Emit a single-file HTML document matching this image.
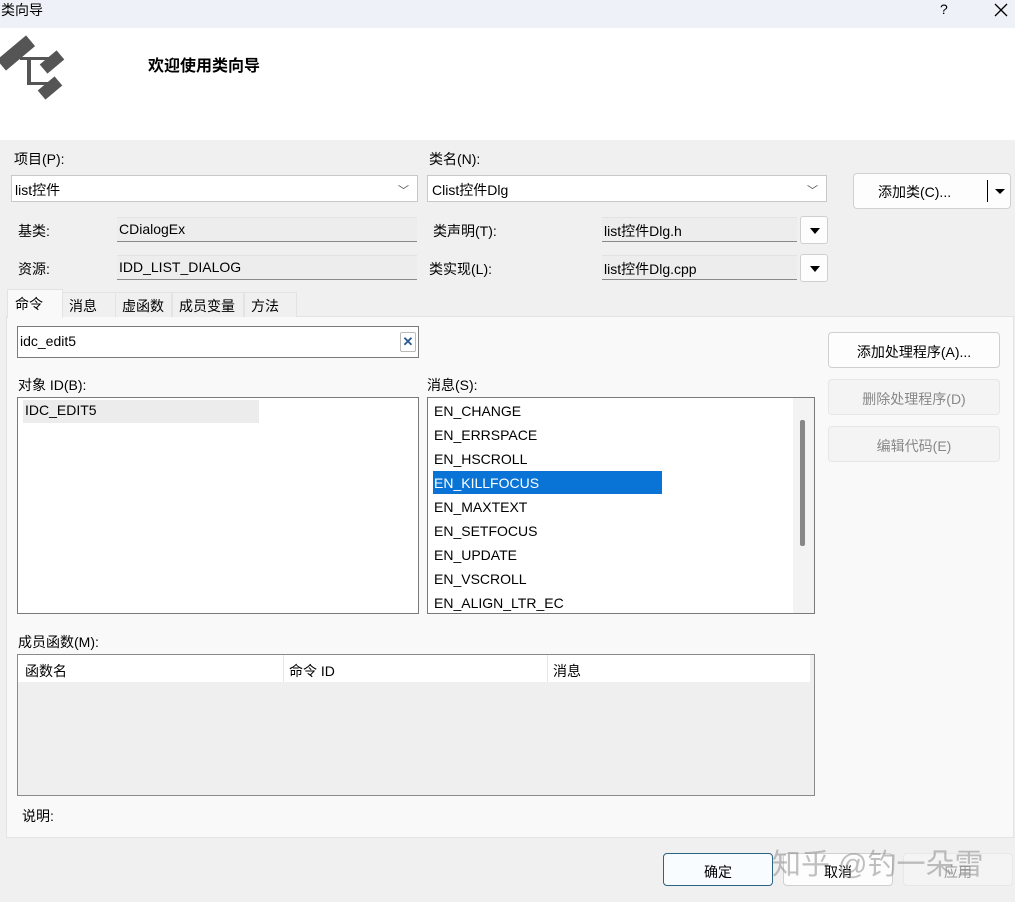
<!DOCTYPE html>
<html><head><meta charset="utf-8"><style>
*{box-sizing:border-box;margin:0;padding:0}
body{width:1015px;height:902px;background:#f0f0f0;font-family:"Liberation Sans","Noto Sans CJK SC",sans-serif;font-size:14px;color:#000;position:relative;overflow:hidden}
.a{position:absolute}
.box{position:absolute;background:#fff;border:1px solid #c8c8c8}
.ro{position:absolute;background:#ededed;border-bottom:1px solid #8a8a8a;border-top:1px solid #e2e2e2}
.btn{position:absolute;background:#fdfdfd;border:1px solid #d0d0d0;border-radius:4px;text-align:center;font-size:14px}
.dd{position:absolute;width:28px;height:28px;background:#fdfdfd;border:1px solid #d0d0d0;border-radius:3px}
.dd:after{content:"";position:absolute;left:9px;top:11px;border-left:5px solid transparent;border-right:5px solid transparent;border-top:6px solid #000}
.chev{position:absolute;right:8px;top:6px;font-size:11px;color:#555}
.tab{position:absolute;top:292px;height:25px;background:#f0f0f0;border:1px solid #e3e3e3;border-bottom:none;padding:3px 0 0 6px}
.li{position:absolute;left:434px;font-size:14px}
</style></head><body>
<div class="a" style="left:0;top:0;width:1015px;height:28px;background:#eef1f7"></div>
<div class="a" style="left:1px;top:0;font-size:14px">类向导</div>
<div class="a" style="left:940px;top:1px;font-size:14px">?</div>
<svg class="a" style="left:994px;top:3px" width="14" height="14" viewBox="0 0 14 14"><path d="M1 1L13 13M13 1L1 13" stroke="#000" stroke-width="1.3"/></svg>
<div class="a" style="left:0;top:28px;width:1015px;height:112px;background:#fff"></div>
<svg class="a" style="left:0;top:30px" width="66" height="72" viewBox="0 0 66 72">
<g fill="#555">
<rect x="27" y="27" width="4" height="28"/>
<rect x="20" y="27" width="30" height="3"/>
<rect x="27" y="52" width="21" height="3"/>
<rect x="-3" y="16" width="38" height="14" transform="rotate(-40 16 23)"/>
<rect x="41" y="26" width="22" height="12" transform="rotate(-40 52 32)"/>
<rect x="39" y="52" width="22" height="12" transform="rotate(-40 50 58)"/>
</g></svg>
<div class="a" style="left:148px;top:52px;font-size:16px;font-weight:bold">欢迎使用类向导</div>

<div class="a" style="left:14px;top:149px">项目(P):</div>
<div class="box" style="left:11px;top:175px;width:407px;height:27px;padding:4px 3px">list控件<span class="chev">﹀</span></div>
<div class="a" style="left:18px;top:221px">基类:</div>
<div class="ro" style="left:117px;top:217px;width:300px;height:25px;padding:3px 2px">CDialogEx</div>
<div class="a" style="left:18px;top:259px">资源:</div>
<div class="ro" style="left:117px;top:255px;width:300px;height:25px;padding:3px 2px">IDD_LIST_DIALOG</div>

<div class="a" style="left:429px;top:149px">类名(N):</div>
<div class="box" style="left:427px;top:175px;width:400px;height:27px;padding:4px 4px">Clist控件Dlg<span class="chev">﹀</span></div>
<div class="btn" style="left:853px;top:173px;width:158px;height:36px;padding-top:8px;text-align:left;padding-left:24px">添加类(C)...<span class="a" style="left:133px;top:6px;width:1px;height:22px;background:#000"></span><span class="a" style="left:141px;top:15px;border-left:5px solid transparent;border-right:5px solid transparent;border-top:5px solid #000"></span></div>
<div class="a" style="left:433px;top:221px">类声明(T):</div>
<div class="ro" style="left:602px;top:217px;width:195px;height:25px;padding:3px 2px">list控件Dlg.h</div>
<div class="dd" style="left:800px;top:216px"></div>
<div class="a" style="left:429px;top:259px">类实现(L):</div>
<div class="ro" style="left:602px;top:255px;width:195px;height:25px;padding:3px 2px">list控件Dlg.cpp</div>
<div class="dd" style="left:800px;top:254px"></div>

<div class="a" style="left:6px;top:316px;width:1008px;height:522px;background:#f9f9f9;border:1px solid #e3e3e3"></div>
<div class="tab" style="left:62px;width:54px">消息</div>
<div class="tab" style="left:115px;width:57px">虚函数</div>
<div class="tab" style="left:172px;width:72px">成员变量</div>
<div class="tab" style="left:244px;width:53px">方法</div>
<div class="a" style="left:7px;top:289px;width:56px;height:29px;background:#f9f9f9;border:1px solid #e3e3e3;border-bottom:none;padding:4px 0 0 7px">命令</div>

<div class="box" style="left:17px;top:326px;width:402px;height:32px;border-color:#7a7a7a;padding:6px 2px">idc_edit5
<span class="a" style="left:382px;top:5px;width:16px;height:20px;border:1px solid #bbb;border-radius:2px;color:#2a5a90;font-size:13px;text-align:center;line-height:18px;font-weight:bold">✕</span></div>
<div class="a" style="left:18px;top:375px">对象 ID(B):</div>
<div class="box" style="left:17px;top:397px;width:402px;height:217px;border-color:#7a7a7a"></div>
<div class="a" style="left:23px;top:400px;width:236px;height:23px;background:#ececec;padding:2px 2px">IDC_EDIT5</div>

<div class="a" style="left:427px;top:375px">消息(S):</div>
<div class="box" style="left:427px;top:397px;width:388px;height:217px;border-color:#7a7a7a"></div>
<div class="a" style="left:793px;top:398px;width:21px;height:215px;background:#f3f3f3"></div>
<div class="a" style="left:800px;top:420px;width:5px;height:126px;background:#888;border-radius:2px"></div>
<div class="a" style="left:433px;top:471px;width:229px;height:23px;background:#0a74d6"></div>
<div class="li" style="top:403px">EN_CHANGE</div>
<div class="li" style="top:427px">EN_ERRSPACE</div>
<div class="li" style="top:451px">EN_HSCROLL</div>
<div class="li" style="top:475px;color:#fff">EN_KILLFOCUS</div>
<div class="li" style="top:499px">EN_MAXTEXT</div>
<div class="li" style="top:523px">EN_SETFOCUS</div>
<div class="li" style="top:547px">EN_UPDATE</div>
<div class="li" style="top:571px">EN_VSCROLL</div>
<div class="li" style="top:595px">EN_ALIGN_LTR_EC</div>

<div class="btn" style="left:828px;top:332px;width:172px;height:36px;padding-top:9px">添加处理程序(A)...</div>
<div class="btn" style="left:828px;top:379px;width:172px;height:36px;padding-top:9px;color:#888;background:#f4f4f4;border-color:#e6e6e6">删除处理程序(D)</div>
<div class="btn" style="left:828px;top:426px;width:172px;height:36px;padding-top:9px;color:#888;background:#f4f4f4;border-color:#e6e6e6">编辑代码(E)</div>

<div class="a" style="left:18px;top:632px">成员函数(M):</div>
<div class="a" style="left:17px;top:654px;width:798px;height:142px;background:#efefef;border:1px solid #8a8a8a"></div>
<div class="a" style="left:18px;top:655px;width:792px;height:27px;background:#fff"></div>
<div class="a" style="left:283px;top:655px;width:1px;height:27px;background:#e5e5e5"></div>
<div class="a" style="left:547px;top:655px;width:1px;height:27px;background:#e5e5e5"></div>
<div class="a" style="left:25px;top:661px">函数名</div>
<div class="a" style="left:289px;top:661px">命令 ID</div>
<div class="a" style="left:553px;top:661px">消息</div>
<div class="a" style="left:22px;top:806px">说明:</div>

<div class="btn" style="left:663px;top:853px;width:110px;height:33px;padding-top:8px;background:#f9fcfe;border:1px solid #2b6385">确定</div>
<div class="btn" style="left:783px;top:853px;width:110px;height:33px;padding-top:8px">取消</div>
<div class="btn" style="left:903px;top:853px;width:110px;height:33px;padding-top:8px;color:#999;background:#f4f4f4;border-color:#e8e8e8">应用</div>
<div class="a" style="left:772px;top:841px;font-size:29px;color:rgba(140,140,140,0.55);white-space:nowrap">知乎 @钓一朵雪</div>
</body></html>
